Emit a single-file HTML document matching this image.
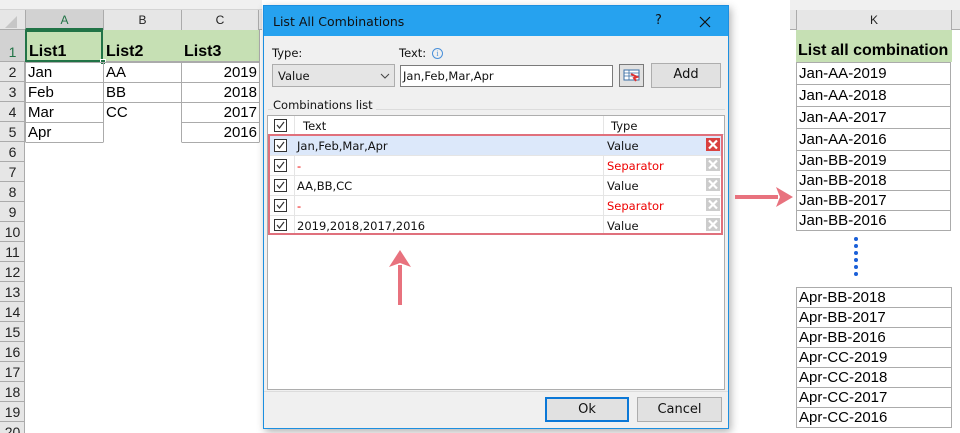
<!DOCTYPE html>
<html><head><meta charset="utf-8"><style>
*{margin:0;padding:0;box-sizing:border-box}
html,body{width:960px;height:433px;overflow:hidden}
body{background:#fff;position:relative;font-family:"Liberation Sans",Arial,sans-serif}
.a{position:absolute}
.t{font-size:15px;color:#000;line-height:20px;white-space:nowrap}
.hd{background:#e6e6e6;font-size:12px;color:#222;text-align:center}
.d{font-family:"DejaVu Sans","Liberation Sans",sans-serif;font-size:11.5px}
.rh div{height:20px;border-bottom:1px solid #ababab;line-height:20px}
</style></head><body>
<div class="a" style="left:0;top:0;width:262px;height:10px;background:#f0f0f0;border-bottom:1px solid #d4d4d4"></div>
<div class="a hd" style="left:0;top:10px;width:262px;height:20px;border-bottom:1px solid #ababab"></div>
<div class="a" style="left:5px;top:16px;width:0;height:0;border-left:12px solid transparent;border-bottom:12px solid #c6c6c6"></div>
<div class="a hd" style="left:25px;top:10px;width:78px;height:20px;line-height:20px;background:#d2d2d2;color:#217346;border-bottom:2px solid #217346;border-left:1px solid #ababab">A</div>
<div class="a hd" style="left:103px;top:10px;width:78px;height:20px;line-height:20px;border-left:1px solid #ababab">B</div>
<div class="a hd" style="left:181px;top:10px;width:78px;height:20px;line-height:20px;border-left:1px solid #ababab;border-right:1px solid #ababab">C</div>
<div class="a" style="left:0;top:30px;width:25px;height:403px;background:#e6e6e6;border-right:1px solid #ababab"></div>
<div class="a hd" style="left:0;top:30px;width:25px;height:32px;line-height:44px;background:#d2d2d2;color:#217346;border-bottom:1px solid #ababab;font-size:14px">1</div>
<div class="a" style="left:25px;top:30px;width:234px;height:32px;background:#c6e0b4;border-bottom:1px solid #ababab"></div>
<div class="a" style="left:25px;top:30px;width:78px;height:32px;border:2px solid #217346"></div>
<div class="a" style="left:100px;top:59px;width:6px;height:6px;background:#217346;border:1px solid #fff"></div>
<div class="a t" style="left:29px;top:42px;font-weight:bold;font-size:16px">List1</div>
<div class="a t" style="left:106px;top:42px;font-weight:bold;font-size:16px">List2</div>
<div class="a t" style="left:184px;top:42px;font-weight:bold;font-size:16px">List3</div>
<svg class="a" style="left:0;top:0" width="262" height="433">
<g stroke="#ababab" stroke-width="1" fill="none">
<path d="M25.5 62.5H259.5M25.5 82.5H259.5M25.5 102.5H259.5M25.5 122.5H103.5M181.5 122.5H259.5M25.5 142.5H103.5M181.5 142.5H259.5"/>
<path d="M25.5 62V142M103.5 62V142M181.5 62V142M259.5 30V142"/>
</g></svg>
<div class="a t" style="left:28px;top:63px">Jan</div><div class="a t" style="left:106px;top:63px">AA</div><div class="a t" style="left:181px;top:63px;width:76px;text-align:right">2019</div>
<div class="a t" style="left:28px;top:83px">Feb</div><div class="a t" style="left:106px;top:83px">BB</div><div class="a t" style="left:181px;top:83px;width:76px;text-align:right">2018</div>
<div class="a t" style="left:28px;top:103px">Mar</div><div class="a t" style="left:106px;top:103px">CC</div><div class="a t" style="left:181px;top:103px;width:76px;text-align:right">2017</div>
<div class="a t" style="left:28px;top:123px">Apr</div><div class="a t" style="left:181px;top:123px;width:76px;text-align:right">2016</div>
<div class="a rh" style="left:0;top:62px;width:25px;font-size:14px;color:#222;text-align:center">
<div>2</div><div>3</div><div>4</div><div>5</div><div>6</div><div>7</div><div>8</div><div>9</div><div>10</div><div>11</div><div>12</div><div>13</div><div>14</div><div>15</div><div>16</div><div>17</div><div>18</div><div>19</div><div>20</div>
</div>

<div class="a" style="left:263px;top:5px;width:466px;height:424px;background:#f0f0f0;border:1px solid #1c8fe0;box-shadow:2px 3px 8px rgba(0,0,0,.3)"></div>
<div class="a" style="left:264px;top:6px;width:464px;height:30px;background:#26a2ef"></div>
<div class="a d" style="left:273px;top:14px;font-size:12.5px;color:#111">List All Combinations</div>
<div class="a d" style="left:655px;top:13px;font-size:13px;color:#111">?</div>
<svg class="a" style="left:699px;top:16px" width="12" height="12"><path d="M1 1L11 11M11 1L1 11" stroke="#111" stroke-width="1.2"/></svg>
<div class="a d" style="left:272px;top:46px;color:#111">Type:</div>
<div class="a d" style="left:399px;top:46px;color:#111">Text:</div>
<div class="a" style="left:432px;top:48px;width:11px;height:11px;border:1px solid #4a90d9;border-radius:50%;font-size:8px;color:#4a90d9;text-align:center;line-height:9px;font-family:'Liberation Serif',serif">i</div>
<div class="a d" style="left:272px;top:64px;width:123px;height:23px;background:#e5e5e5;border:1px solid #adadad;padding:4px 0 0 5px;color:#111">Value</div>
<svg class="a" style="left:380px;top:73px" width="10" height="6"><path d="M1 1L5 5L9 1" stroke="#444" fill="none"/></svg>
<div class="a d" style="left:400px;top:65px;width:213px;height:22px;background:#fff;border:1px solid #7a7a7a;padding:3px 0 0 2px;color:#111">Jan,Feb,Mar,Apr</div>
<div class="a" style="left:619px;top:64px;width:25px;height:23px;background:#e1e1e1;border:1px solid #7a7a7a"></div>
<svg class="a" style="left:623px;top:68px" width="17" height="14"><rect x="1" y="2" width="15" height="10" fill="#fff" stroke="#3a6ea5"/><path d="M1 5H16M1 8H16M6 2V12" stroke="#3a6ea5" stroke-width=".8"/><path d="M8 6L14 9L11 10L13 13" stroke="#d33" stroke-width="2" fill="none"/></svg>
<div class="a d" style="left:651px;top:63px;width:70px;height:25px;background:#e1e1e1;border:1px solid #adadad;text-align:center;line-height:22px;font-size:13px;color:#111">Add</div>
<div class="a" style="left:268px;top:109px;width:457px;height:1px;background:#dcdcdc"></div>
<div class="a d" style="left:273px;top:98px;color:#111;background:#f0f0f0;padding-right:3px">Combinations list</div>
<div class="a" style="left:267px;top:115px;width:458px;height:275px;background:#fff;border:1px solid #adadad"></div>
<div class="a" style="left:268px;top:116px;width:456px;height:19px;border-bottom:1px solid #e5e5e5"></div>
<div class="a" style="left:294px;top:116px;width:1px;height:119px;background:#e5e5e5"></div>
<div class="a" style="left:603px;top:116px;width:1px;height:119px;background:#e5e5e5"></div>
<div class="a d" style="left:303px;top:119px;color:#111">Text</div>
<div class="a d" style="left:611px;top:119px;color:#111">Type</div>
<div class="a" style="left:268px;top:135px;width:454px;height:20px;background:#dce8fa"></div>
<div class="a" style="left:268px;top:155px;width:454px;height:1px;background:#e5e5e5"></div>
<div class="a" style="left:268px;top:175px;width:454px;height:1px;background:#e5e5e5"></div>
<div class="a" style="left:268px;top:195px;width:454px;height:1px;background:#e5e5e5"></div>
<div class="a" style="left:268px;top:215px;width:454px;height:1px;background:#e5e5e5"></div>
<svg class="a" style="left:274px;top:119px" width="14" height="112">
<g fill="#fff" stroke="#333"><rect x=".5" y=".5" width="12" height="12"/><rect x=".5" y="20.5" width="12" height="12"/><rect x=".5" y="40.5" width="12" height="12"/><rect x=".5" y="60.5" width="12" height="12"/><rect x=".5" y="80.5" width="12" height="12"/><rect x=".5" y="100.5" width="12" height="11"/></g>
<g fill="none" stroke="#333" stroke-width="1.2"><path d="M3 6L5.5 9L10 3"/><path d="M3 26L5.5 29L10 23"/><path d="M3 46L5.5 49L10 43"/><path d="M3 66L5.5 69L10 63"/><path d="M3 86L5.5 89L10 83"/><path d="M3 106L5.5 109L10 103"/></g></svg>
<div class="a d" style="left:297px;top:139px;color:#111">Jan,Feb,Mar,Apr</div>
<div class="a d" style="left:297px;top:159px;color:#e00">-</div>
<div class="a d" style="left:297px;top:179px;color:#111">AA,BB,CC</div>
<div class="a d" style="left:297px;top:199px;color:#e00">-</div>
<div class="a d" style="left:297px;top:219px;color:#111">2019,2018,2017,2016</div>
<div class="a d" style="left:607px;top:139px;color:#111">Value</div>
<div class="a d" style="left:607px;top:159px;color:#e00">Separator</div>
<div class="a d" style="left:607px;top:179px;color:#111">Value</div>
<div class="a d" style="left:607px;top:199px;color:#e00">Separator</div>
<div class="a d" style="left:607px;top:219px;color:#111">Value</div>
<svg class="a" style="left:706px;top:138px" width="14" height="94">
<rect width="14" height="13" fill="#d9403f"/><rect y="20" width="14" height="13" fill="#ccc"/><rect y="40" width="14" height="13" fill="#ccc"/><rect y="60" width="14" height="13" fill="#ccc"/><rect y="80" width="14" height="13" fill="#ccc"/>
<g stroke="#fff" stroke-width="2.2"><path d="M3 2.5L11 10.5M11 2.5L3 10.5"/><path d="M3 22.5L11 30.5M11 22.5L3 30.5"/><path d="M3 42.5L11 50.5M11 42.5L3 50.5"/><path d="M3 62.5L11 70.5M11 62.5L3 70.5"/><path d="M3 82.5L11 90.5M11 82.5L3 90.5"/></g></svg>
<div class="a" style="left:268px;top:134px;width:455px;height:101px;border:2px solid #e0707c"></div>
<div class="a" style="left:264px;top:391px;width:464px;height:1px;background:#dcdcdc"></div>
<div class="a d" style="left:545px;top:397px;width:84px;height:25px;background:#e1e1e1;border:2px solid #0b78d7;text-align:center;line-height:21px;font-size:13px;color:#111">Ok</div>
<div class="a d" style="left:637px;top:397px;width:85px;height:25px;background:#e1e1e1;border:1px solid #adadad;text-align:center;line-height:23px;font-size:13px;color:#111">Cancel</div>
<svg class="a" style="left:385px;top:245px" width="32" height="65"><path d="M15 60V20" stroke="#e8727e" stroke-width="4"/><path d="M15 5L26 22L15 18L4 22Z" fill="#e8727e"/></svg>
<svg class="a" style="left:733px;top:185px" width="62" height="25"><path d="M2 12H45" stroke="#e8727e" stroke-width="4"/><path d="M60 12L43 2L47 12L43 22Z" fill="#e8727e"/></svg>

<div class="a" style="left:790px;top:0;width:170px;height:10px;background:#f0f0f0"></div>
<div class="a hd" style="left:790px;top:10px;width:170px;height:20px;border-bottom:1px solid #ababab"></div>
<div class="a hd" style="left:796px;top:10px;width:156px;height:20px;line-height:20px;border-left:1px solid #ababab;border-right:1px solid #ababab">K</div>
<div class="a" style="left:796px;top:30px;width:156px;height:32px;background:#c6e0b4"></div>
<div class="a t" style="left:798px;top:41px;font-weight:bold;font-size:16px">List all combination</div>
<div class="a" style="left:796px;top:62px;width:155px;border:1px solid #ababab;border-bottom:none">
<div class="t" style="height:22px;border-bottom:1px solid #ababab;padding:1px 2px">Jan-AA-2019</div>
<div class="t" style="height:22px;border-bottom:1px solid #ababab;padding:1px 2px">Jan-AA-2018</div>
<div class="t" style="height:22px;border-bottom:1px solid #ababab;padding:1px 2px">Jan-AA-2017</div>
<div class="t" style="height:22px;border-bottom:1px solid #ababab;padding:1px 2px">Jan-AA-2016</div>
<div class="t" style="height:20px;border-bottom:1px solid #ababab;padding:0 2px">Jan-BB-2019</div>
<div class="t" style="height:20px;border-bottom:1px solid #ababab;padding:0 2px">Jan-BB-2018</div>
<div class="t" style="height:20px;border-bottom:1px solid #ababab;padding:0 2px">Jan-BB-2017</div>
<div class="t" style="height:20px;border-bottom:1px solid #ababab;padding:0 2px">Jan-BB-2016</div>
</div>
<svg class="a" style="left:852px;top:235px" width="10" height="45"><g fill="#1a5fd8"><circle cx="4" cy="4" r="2"/><circle cx="4" cy="11" r="2"/><circle cx="4" cy="18" r="2"/><circle cx="4" cy="25" r="2"/><circle cx="4" cy="32" r="2"/><circle cx="4" cy="39" r="2"/></g></svg>
<div class="a" style="left:796px;top:287px;width:156px;border:1px solid #ababab;border-bottom:none">
<div class="t" style="height:20px;border-bottom:1px solid #ababab;padding:0 2px">Apr-BB-2018</div>
<div class="t" style="height:20px;border-bottom:1px solid #ababab;padding:0 2px">Apr-BB-2017</div>
<div class="t" style="height:20px;border-bottom:1px solid #ababab;padding:0 2px">Apr-BB-2016</div>
<div class="t" style="height:20px;border-bottom:1px solid #ababab;padding:0 2px">Apr-CC-2019</div>
<div class="t" style="height:20px;border-bottom:1px solid #ababab;padding:0 2px">Apr-CC-2018</div>
<div class="t" style="height:20px;border-bottom:1px solid #ababab;padding:0 2px">Apr-CC-2017</div>
<div class="t" style="height:20px;border-bottom:1px solid #ababab;padding:0 2px">Apr-CC-2016</div>
</div>
</body></html>
